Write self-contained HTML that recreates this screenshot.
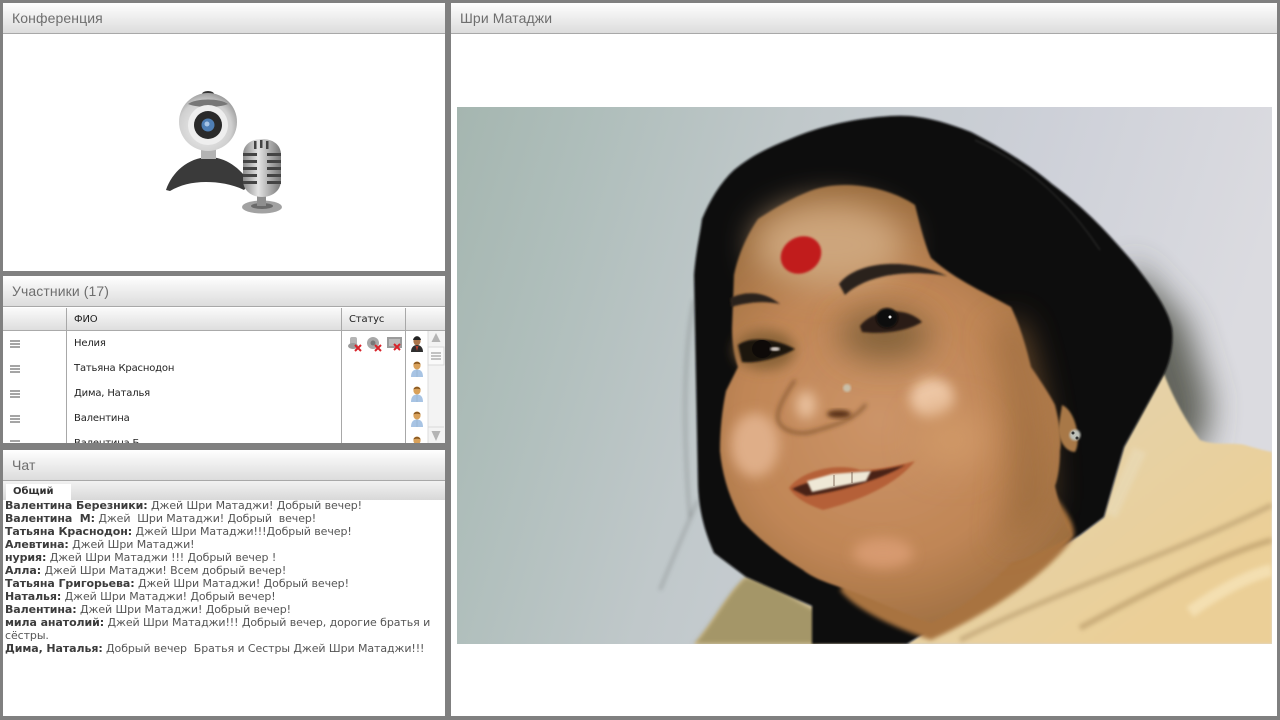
<!DOCTYPE html>
<html lang="ru">
<head>
<meta charset="utf-8">
<title>Конференция</title>
<style>
html,body{margin:0;padding:0;width:1280px;height:720px;overflow:hidden;background:#808080}
.p{position:absolute;background:#fff;overflow:hidden}
.h{position:absolute;left:0;right:0;top:0;height:30px;background:linear-gradient(#fff,#f4f4f4 30%,#dcdcdc);border-bottom:1px solid #a8a8a8;font:14px/30px "Liberation Sans",sans-serif;color:#6e6e6e;padding-left:9px;letter-spacing:.1px}
.t{position:absolute;font:10px/14px "DejaVu Sans",sans-serif;color:#222;white-space:nowrap;letter-spacing:-.17px}
.chat{position:absolute;left:2px;top:49px;width:436px;font:11px/13px "DejaVu Sans",sans-serif;color:#555;letter-spacing:-.085px}
.chat b{color:#3c3c3c}
.chat div{white-space:nowrap}
</style>
</head>
<body>
<div class="p" style="left:3px;top:3px;width:442px;height:268px">
  <div class="h">Конференция</div>
  <svg style="position:absolute;left:147px;top:77px" width="150" height="140" viewBox="150 80 150 140">
    <defs>
      <radialGradient id="sph" cx=".45" cy=".6" r=".65"><stop offset="0" stop-color="#f2f2f2"/><stop offset=".7" stop-color="#d0d0d0"/><stop offset="1" stop-color="#8e8e8e"/></radialGradient>
      <linearGradient id="mic" x1="0" x2="1" y1="0" y2="0"><stop offset="0" stop-color="#8a8a8a"/><stop offset=".4" stop-color="#e4e4e4"/><stop offset="1" stop-color="#777"/></linearGradient>
    </defs>
    <ellipse cx="208" cy="94" rx="6" ry="3" fill="#333"/>
    <path d="M166 190C172 172 188 158 208 157C226 157 240 168 250 183L244 190C232 184 218 182 206 182C192 182 180 185 170 191Z" fill="#3a3a3a"/>
    <rect x="201" y="148" width="15" height="11" fill="#b3b3b3"/>
    <circle cx="208" cy="122" r="29" fill="url(#sph)"/>
    <path d="M188 104C196 98 220 98 228 104C218 108 198 108 188 104Z" fill="#777"/>
    <circle cx="208" cy="125" r="20" fill="#eee"/>
    <circle cx="208" cy="125" r="14" fill="#2a2a2a"/>
    <circle cx="208" cy="125" r="6.500" fill="#4f7fb5"/>
    <circle cx="207" cy="124" r="2.500" fill="#a8c5e6"/>
    <ellipse cx="262" cy="207" rx="20" ry="6.500" fill="#a2a2a2"/>
    <ellipse cx="262" cy="206" rx="11" ry="3" fill="#6a6a6a"/>
    <rect x="257" y="195" width="9" height="11" fill="#8f8f8f"/>
    <path d="M243 155C243 144 252 139 262 139C272 139 281 144 281 155V180C281 191 272 197 262 197C252 197 243 191 243 180Z" fill="url(#mic)"/>
    <g fill="#444"><rect x="243" y="153" width="14" height="3"/><rect x="267" y="153" width="14" height="3"/><rect x="243" y="160" width="14" height="3"/><rect x="267" y="160" width="14" height="3"/><rect x="243" y="167" width="14" height="3"/><rect x="267" y="167" width="14" height="3"/><rect x="243" y="174" width="14" height="3"/><rect x="267" y="174" width="14" height="3"/><rect x="243" y="181" width="14" height="3"/><rect x="267" y="181" width="14" height="3"/><rect x="254" y="141" width="2.500" height="8"/><rect x="260" y="140" width="2.500" height="8"/><rect x="266" y="141" width="2.500" height="8"/></g>
  </svg>
</div>

<div class="p" style="left:3px;top:276px;width:442px;height:167px">
  <div class="h">Участники (17)</div>
  <div style="position:absolute;left:0;right:0;top:32px;height:22px;background:linear-gradient(#fafafa,#dedede);border-bottom:1px solid #aaa"></div>
  <div style="position:absolute;left:63px;top:32px;bottom:0;width:1px;background:#a8a8a8"></div>
  <div style="position:absolute;left:338px;top:32px;bottom:0;width:1px;background:#a8a8a8"></div>
  <div style="position:absolute;left:402px;top:32px;bottom:0;width:1px;background:#a8a8a8"></div>
  <div class="t" style="left:71px;top:37px">ФИО</div>
  <div class="t" style="left:346px;top:37px">Статус</div>
  <div class="t" style="left:71px;top:61px">Нелия</div>
  <div class="t" style="left:71px;top:86px">Татьяна Краснодон</div>
  <div class="t" style="left:71px;top:111px">Дима, Наталья</div>
  <div class="t" style="left:71px;top:136px">Валентина</div>
  <div class="t" style="left:71px;top:161px">Валентина Б</div>
  <svg style="position:absolute;left:0;top:0" width="442" height="167" viewBox="3 276 442 167">
    <defs>
      <g id="bars"><rect x="0" y="0" width="10" height="2" fill="#a5a5a5"/><rect x="0" y="3" width="10" height="2" fill="#a5a5a5"/><rect x="0" y="6" width="10" height="2" fill="#a5a5a5"/></g>
      <g id="man"><ellipse cx="7" cy="4.500" rx="3.600" ry="4" fill="#d9a15a"/><path d="M3.400 3.500C4 0 10 0 10.600 3.500C8.500 2.500 5.500 2.500 3.400 3.500Z" fill="#8b5a22"/><path d="M1 16C1 10 4 8.500 7 8.500C10 8.500 13 10 13 16Z" fill="#a8c4e4"/><rect x="6" y="9" width="2" height="7" fill="#f5f5f5"/><path d="M7 9V16" stroke="#4d86c2"/></g>
      <g id="x"><path d="M0 0L6 6M6 0L0 6" stroke="#d8232a" stroke-width="2"/></g>
    </defs>
    <use href="#bars" x="10" y="340"/><use href="#bars" x="10" y="365"/><use href="#bars" x="10" y="390"/><use href="#bars" x="10" y="415"/><use href="#bars" x="10" y="440"/>
    <g>
      <rect x="350" y="337" width="7" height="9" rx="2" fill="#b5b5b5"/><ellipse cx="353" cy="346" rx="5" ry="3" fill="#9a9a9a"/>
      <use href="#x" x="355" y="345"/>
      <circle cx="373" cy="343" r="6" fill="#a8a8a8"/><circle cx="373" cy="343" r="2.500" fill="#777"/>
      <use href="#x" x="375" y="345"/>
      <rect x="387" y="337" width="15" height="11" fill="#9b9b9b"/><rect x="389" y="339" width="11" height="7" fill="#bcbcbc"/>
      <use href="#x" x="394" y="344"/>
    </g>
    <g><ellipse cx="417" cy="341" rx="3.600" ry="4.500" fill="#a9744a"/><path d="M413 340C414 335 420 335 421 340Z" fill="#222"/><path d="M411 352C411 347 414 345 417 345C420 345 423 347 423 352Z" fill="#2f2f2f"/><path d="M415.500 346H418.500L417 351Z" fill="#b23b2a"/></g>
    <use href="#man" x="410" y="361"/><use href="#man" x="410" y="386"/><use href="#man" x="410" y="411"/><use href="#man" x="410" y="436"/>
    <rect x="428" y="331" width="17" height="112" fill="#f3f3f3"/>
    <path d="M428 331V443" stroke="#dcdcdc"/>
    <rect x="428" y="347" width="16" height="18" fill="#fafafa" stroke="#d8d8d8"/>
    <path d="M431 353H441M431 356H441M431 359H441" stroke="#8a8a8a"/>
    <path d="M428 427H444" stroke="#d8d8d8"/>
    <path d="M436 333L440.500 342H431.500Z" fill="#b4b4b4"/>
    <path d="M436 441L440.500 431H431.500Z" fill="#b4b4b4"/>
  </svg>
</div>

<div class="p" style="left:3px;top:450px;width:442px;height:266px">
  <div class="h">Чат</div>
  <div style="position:absolute;left:0;right:0;top:31px;height:19px;background:linear-gradient(#f2f2f2,#d8d8d8)"></div>
  <div style="position:absolute;left:3px;top:34px;width:65px;height:16px;background:#fff;font:bold 10px/16px 'DejaVu Sans',sans-serif;color:#333;text-indent:7px">Общий</div>
  <div class="chat">
    <div><b>Валентина Березники:</b> Джей Шри Матаджи! Добрый вечер!</div>
    <div><b>Валентина&nbsp; М:</b> Джей&nbsp; Шри Матаджи! Добрый&nbsp; вечер!</div>
    <div><b>Татьяна Краснодон:</b> Джей Шри Матаджи!!!Добрый вечер!</div>
    <div><b>Алевтина:</b> Джей Шри Матаджи!</div>
    <div><b>нурия:</b> Джей Шри Матаджи !!! Добрый вечер !</div>
    <div><b>Алла:</b> Джей Шри Матаджи! Всем добрый вечер!</div>
    <div><b>Татьяна Григорьева:</b> Джей Шри Матаджи! Добрый вечер!</div>
    <div><b>Наталья:</b> Джей Шри Матаджи! Добрый вечер!</div>
    <div><b>Валентина:</b> Джей Шри Матаджи! Добрый вечер!</div>
    <div><b>мила анатолий:</b> Джей Шри Матаджи!!! Добрый вечер, дорогие братья и</div>
    <div>сёстры.</div>
    <div><b>Дима, Наталья:</b> Добрый вечер&nbsp; Братья и Сестры Джей Шри Матаджи!!!</div>
  </div>
</div>

<div class="p" style="left:451px;top:3px;width:826px;height:713px">
  <div class="h">Шри Матаджи</div>
  <svg style="position:absolute;left:6px;top:104px" width="815" height="537" viewBox="457 107 815 537">
    <defs>
      <linearGradient id="wall" x1="0" x2="1" y1="0" y2=".2">
        <stop offset="0" stop-color="#a5b6b0"/><stop offset=".17" stop-color="#afbebb"/><stop offset=".4" stop-color="#c0c8ca"/><stop offset=".7" stop-color="#cdd0d8"/><stop offset="1" stop-color="#dbdbe0"/>
      </linearGradient>
      <radialGradient id="skin" gradientUnits="userSpaceOnUse" cx="880" cy="420" r="230">
        <stop offset="0" stop-color="#cc9468"/><stop offset=".6" stop-color="#c08656"/><stop offset="1" stop-color="#9a6c3e"/>
      </radialGradient>
      <linearGradient id="shawl" x1="0" x2="1" y1="0" y2=".6"><stop offset="0" stop-color="#c5b389"/><stop offset=".5" stop-color="#e4d2ab"/><stop offset="1" stop-color="#ebcf97"/></linearGradient>
      <filter id="b1"><feGaussianBlur stdDeviation="1"/></filter>
      <filter id="b2" x="-30%" y="-30%" width="160%" height="160%"><feGaussianBlur stdDeviation="2.500"/></filter>
      <filter id="b6" x="-60%" y="-60%" width="220%" height="220%"><feGaussianBlur stdDeviation="6"/></filter>
      <filter id="b14" x="-80%" y="-80%" width="260%" height="260%"><feGaussianBlur stdDeviation="16"/></filter>
    </defs>
    <rect x="457" y="107" width="815" height="537" fill="url(#wall)"/>
    <path d="M1130 260L1185 320L1210 400L1205 445L1120 470Z" fill="#4d5045" filter="url(#b14)" opacity=".85"/>
    <!-- shawl -->
    <path d="M694 644C712 625 728 592 746 577C775 585 795 600 812 606L907 644L1000 590L1080 535L1104 517L1124 447L1164 374C1172 395 1185 420 1200 440C1215 446 1232 442 1245 445C1255 448 1262 450 1272 452V644Z" fill="url(#shawl)" filter="url(#b1)"/>
    <path d="M694 644C712 625 728 592 746 577C775 585 795 600 815 610L818 644Z" fill="#a49668" filter="url(#b2)"/>
    <path d="M960 640C1060 590 1170 555 1272 505" stroke="#bb9f70" stroke-width="5" fill="none" filter="url(#b2)" opacity=".7"/>
    <path d="M1080 628C1150 590 1220 555 1272 540" stroke="#b39463" stroke-width="6" fill="none" filter="url(#b2)" opacity=".6"/>
    <path d="M1190 612C1220 590 1250 575 1272 570" stroke="#f6e3b8" stroke-width="12" fill="none" filter="url(#b2)" opacity=".8"/>
    <path d="M1140 450L1110 515" stroke="#e9d9b4" stroke-width="14" filter="url(#b2)" opacity=".8"/>
    <!-- hair -->
    <path d="M891 116C920 114 945 122 971 132C1000 147 1030 165 1052 184C1090 212 1112 238 1132 261C1155 290 1168 310 1172 328C1174 345 1170 362 1164 374L1124 447L1104 517L1080 535L1040 560L907 644H812V606L746 577L714 553C704 530 699 510 698 486L696 381L694 275C696 250 700 235 702 219C710 200 720 183 734 170C752 155 770 147 790 139C825 124 860 118 891 116Z" fill="#0a0a10" filter="url(#b1)"/>
    <path d="M975 140C1030 165 1070 205 1100 250" stroke="#6a6a68" stroke-width="1" fill="none" filter="url(#b1)" opacity=".4"/>
    <path d="M694 300C684 350 682 420 690 520M698 500C685 530 672 560 660 590" stroke="#3a3e3c" stroke-width="2" fill="none" filter="url(#b2)" opacity=".35"/>
    <!-- neck and face -->
    <path d="M1050 490C1070 515 1078 530 1072 540C1045 575 995 610 931 640C900 630 855 610 840 590L900 500Z" fill="#a8733f" filter="url(#b2)"/>
    <path d="M810 191C845 178 890 188 915 205C920 225 925 245 931 258C955 280 990 295 1011 307C1020 325 1027 350 1031 367C1040 380 1050 395 1055 405C1060 425 1062 440 1060 451C1060 465 1058 478 1055 486C1060 510 1065 525 1072 535C1050 550 1030 556 1011 563C985 590 960 610 931 623C900 612 875 600 851 591C835 585 815 580 803 570C780 556 760 540 742 521C730 500 722 475 720 451C720 430 722 410 726 391L738 367C734 355 732 342 732 328L734 275C738 255 747 235 758 219C775 208 792 198 810 191Z" fill="url(#skin)" filter="url(#b1)"/>
    <ellipse cx="830" cy="245" rx="75" ry="42" fill="#cda57b" filter="url(#b14)"/>
    <path d="M1020 320C1040 380 1050 440 1048 510L1000 550C1015 470 1010 390 990 330Z" fill="#98693a" filter="url(#b14)" opacity=".7"/>
    <!-- highlights -->
    <ellipse cx="932" cy="398" rx="22" ry="20" fill="#efc9a8" filter="url(#b6)"/>
    <ellipse cx="952" cy="440" rx="35" ry="30" fill="#cf9766" filter="url(#b14)"/>
    <ellipse cx="755" cy="445" rx="24" ry="32" fill="#dfae88" filter="url(#b6)"/>
    <ellipse cx="883" cy="553" rx="30" ry="15" fill="#d79a70" filter="url(#b6)"/>
    <ellipse cx="806" cy="405" rx="10" ry="14" fill="#e9c09c" filter="url(#b6)"/>
    <!-- eye sockets -->
    <ellipse cx="885" cy="335" rx="46" ry="26" fill="#85633a" filter="url(#b14)"/>
    <ellipse cx="765" cy="350" rx="30" ry="20" fill="#8a6339" filter="url(#b6)"/>
    <!-- brows -->
    <path d="M839 284C855 262 905 256 947 276C915 270 870 272 845 295Z" fill="#2a231b" filter="url(#b1)"/>
    <path d="M730 298C748 290 765 292 780 304C762 300 745 303 731 307Z" fill="#2a211a" filter="url(#b1)"/>
    <!-- eyes -->
    <path d="M860 326C872 310 905 305 922 322C910 330 885 335 862 332Z" fill="#2a1d13" filter="url(#b1)"/>
    <ellipse cx="887" cy="318" rx="11" ry="10" fill="#0c0807" filter="url(#b1)"/>
    <circle cx="890" cy="317" r="1.500" fill="#eee"/>
    <path d="M738 345C750 336 775 338 795 349C780 358 755 364 742 362Z" fill="#1a1310" filter="url(#b1)"/>
    <ellipse cx="762" cy="349" rx="10" ry="9" fill="#0e0a08"/>
    <ellipse cx="775" cy="349" rx="5" ry="2" fill="#d9cfc8" filter="url(#b1)"/>
    <!-- nose -->
    <path d="M795 380C785 395 776 410 778 420C782 432 800 436 815 431C835 425 855 420 866 404" fill="none" stroke="#6e4424" stroke-width="2" filter="url(#b2)"/>
    <ellipse cx="839" cy="414" rx="12" ry="4" fill="#5a3319" filter="url(#b2)"/>
    <circle cx="847" cy="388" r="4" fill="#c9bfa8" filter="url(#b1)"/>
    <!-- mouth -->
    <path d="M789 488C800 472 835 462 860 470C880 470 900 465 915 461C900 480 870 498 823 510C808 505 795 498 789 488Z" fill="#b56038" filter="url(#b1)"/>
    <path d="M792 489C815 476 870 474 905 465C885 478 840 492 806 496Z" fill="#4a2216" filter="url(#b1)"/>
    <path d="M807 481L832 474L871 471L866 481L830 488L812 492Z" fill="#efe8d6" filter="url(#b1)"/>
    <path d="M834 475V486M852 472V483" stroke="#6a5040" stroke-width=".8"/>
    <!-- bindi -->
    <ellipse cx="801" cy="255" rx="21" ry="18" transform="rotate(-30 801 255)" fill="#c11a1f" filter="url(#b1)"/>
    <!-- ear -->
    <path d="M1062 405C1075 410 1082 440 1075 452C1068 452 1060 445 1058 430Z" fill="#a87846" filter="url(#b1)"/>
    <circle cx="1075" cy="435" r="5.500" fill="#bfc2bb" filter="url(#b1)"/>
    <circle cx="1073" cy="433" r="1.500" fill="#333"/>
    <circle cx="1077" cy="438" r="1.500" fill="#333"/>
  </svg>
</div>
</body>
</html>
